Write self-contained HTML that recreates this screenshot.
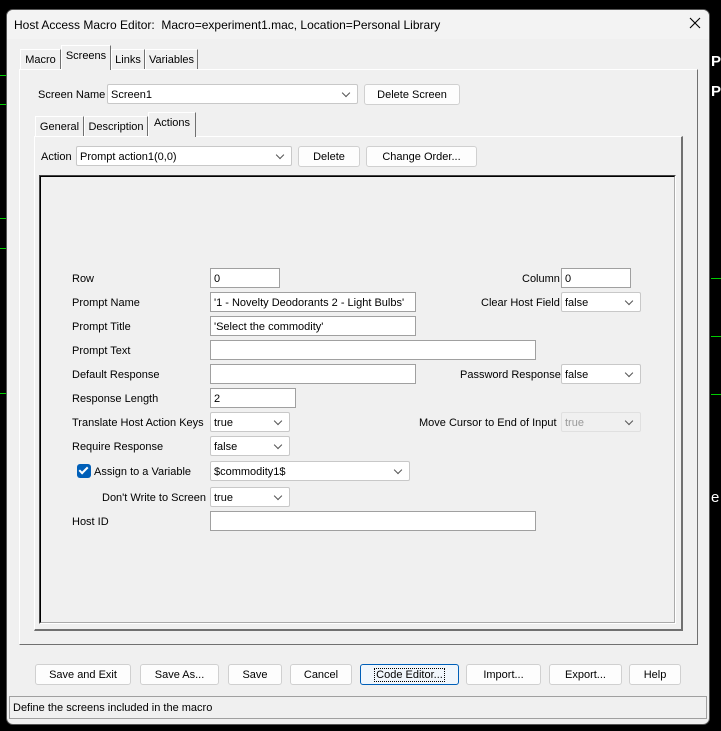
<!DOCTYPE html>
<html><head><style>
*{box-sizing:border-box;margin:0;padding:0}
body{width:721px;height:731px;background:#000;position:relative;overflow:hidden;font-family:"Liberation Sans",sans-serif;font-size:11px;color:#000}
.a{position:absolute}
.t{position:absolute;white-space:nowrap;line-height:14px;margin-top:1px}
.in{position:absolute;background:#fff;border:1px solid #a0a0a0;height:20px;padding:3px 3px 1px;line-height:14px;white-space:nowrap}
.sel{position:absolute;background:#fff;border:1px solid #c8c8c8;border-radius:2px;height:20px;padding:3px 3px 1px;line-height:14px;white-space:nowrap}
.sel:after{content:"";position:absolute;right:8px;top:5px;width:5px;height:5px;border-right:1px solid #555;border-bottom:1px solid #555;transform:rotate(45deg)}
.btn{position:absolute;background:#fdfdfd;border:1px solid #d0d0d0;border-radius:3px;height:21px;text-align:center;line-height:20px;white-space:nowrap}
.tab{position:absolute;background:#f0f0f0;border:1px solid #fff;border-right:1px solid #707070;border-bottom:none;text-align:center;line-height:20px}
.g{position:absolute;height:1px;background:#0c0}
</style></head><body>
<div class="g" style="left:0;top:75px;width:6px"></div>
<div class="g" style="left:0;top:104px;width:6px"></div>
<div class="g" style="left:0;top:218px;width:6px"></div>
<div class="g" style="left:0;top:248px;width:6px"></div>
<div class="g" style="left:0;top:393px;width:6px"></div>
<div class="g" style="left:711px;top:278px;width:10px"></div>
<div class="g" style="left:711px;top:336px;width:10px"></div>
<div class="g" style="left:711px;top:394px;width:10px"></div>
<div class="t" style="left:711px;top:54px;color:#fff;font-size:15px;font-weight:bold">P</div>
<div class="t" style="left:711px;top:84px;color:#fff;font-size:15px;font-weight:bold">P</div>
<div class="t" style="left:711px;top:490px;color:#fff;font-size:15px">e</div>
<div class="a" style="left:6px;top:9px;width:704px;height:716px;background:#f0f0f0;border-radius:7px;border:1px solid #555;overflow:hidden">
 <div class="a" style="left:0;top:0;width:704px;height:29px;background:#f3f3f3"></div>
</div>
<div class="t" style="left:14px;top:17px;font-size:12px">Host Access Macro Editor:&nbsp; Macro=experiment1.mac, Location=Personal Library</div>
<svg class="a" style="left:689px;top:17px" width="12" height="12"><path d="M1 1L11 11M11 1L1 11" stroke="#000" stroke-width="1.1"/></svg>

<div class="a" style="left:19px;top:69px;width:679px;height:576px;border:1px solid #fff;border-right:1px solid #707070;border-bottom:1px solid #707070"></div>
<div class="tab" style="left:20px;top:49px;width:41px;height:20px">Macro</div>
<div class="tab" style="left:61px;top:45px;width:50px;height:25px;z-index:2">Screens</div>
<div class="tab" style="left:111px;top:49px;width:34px;height:20px">Links</div>
<div class="tab" style="left:145px;top:49px;width:53px;height:20px">Variables</div>

<div class="t" style="left:38px;top:87px">Screen Name</div>
<div class="sel" style="left:107px;top:84px;width:251px">Screen1</div>
<div class="btn" style="left:364px;top:84px;width:96px">Delete Screen</div>

<div class="a" style="left:34px;top:136px;width:649px;height:495px;border:1px solid #fff;border-right:2px solid #707070;border-bottom:2px solid #707070"></div>
<div class="tab" style="left:35px;top:116px;width:49px;height:20px">General</div>
<div class="tab" style="left:84px;top:116px;width:64px;height:20px">Description</div>
<div class="tab" style="left:148px;top:112px;width:48px;height:25px;z-index:2">Actions</div>

<div class="t" style="left:41px;top:149px">Action</div>
<div class="sel" style="left:76px;top:146px;width:216px">Prompt action1(0,0)</div>
<div class="btn" style="left:298px;top:146px;width:62px">Delete</div>
<div class="btn" style="left:366px;top:146px;width:111px">Change Order...</div>

<div class="a" style="left:39px;top:175px;width:637px;height:449px;border:1px solid #444;border-right-color:#fff;border-bottom-color:#fff"><div class="a" style="left:0;top:0;right:0;bottom:0;border:1px solid #000;border-right-color:#aaa;border-bottom-color:#aaa"></div></div>

<div class="t" style="left:72px;top:271px">Row</div>
<div class="in" style="left:210px;top:268px;width:70px">0</div>
<div class="t" style="left:522px;top:271px">Column</div>
<div class="in" style="left:561px;top:268px;width:70px">0</div>

<div class="t" style="left:72px;top:295px">Prompt Name</div>
<div class="in" style="left:210px;top:292px;width:206px">'1 - Novelty Deodorants 2 - Light Bulbs'</div>
<div class="t" style="left:481px;top:295px">Clear Host Field</div>
<div class="sel" style="left:561px;top:292px;width:80px">false</div>

<div class="t" style="left:72px;top:319px">Prompt Title</div>
<div class="in" style="left:210px;top:316px;width:206px">'Select the commodity'</div>

<div class="t" style="left:72px;top:343px">Prompt Text</div>
<div class="in" style="left:210px;top:340px;width:326px"></div>

<div class="t" style="left:72px;top:367px">Default Response</div>
<div class="in" style="left:210px;top:364px;width:206px"></div>
<div class="t" style="left:460px;top:367px">Password Response</div>
<div class="sel" style="left:561px;top:364px;width:80px">false</div>

<div class="t" style="left:72px;top:391px">Response Length</div>
<div class="in" style="left:210px;top:388px;width:86px">2</div>

<div class="t" style="left:72px;top:415px">Translate Host Action Keys</div>
<div class="sel" style="left:210px;top:412px;width:80px">true</div>
<div class="t" style="left:419px;top:415px">Move Cursor to End of Input</div>
<div class="sel" style="left:561px;top:412px;width:80px;background:#f0f0f0;border-color:#e0e0e0;color:#999">true</div>

<div class="t" style="left:72px;top:439px">Require Response</div>
<div class="sel" style="left:210px;top:436px;width:80px">false</div>

<div class="a" style="left:77px;top:464px;width:14px;height:14px;background:#005fb8;border-radius:3px"><div class="a" style="left:4px;top:1px;width:5px;height:9px;border-right:2px solid #fff;border-bottom:2px solid #fff;transform:rotate(45deg)"></div></div>
<div class="t" style="left:94px;top:464px">Assign to a Variable</div>
<div class="sel" style="left:210px;top:461px;width:200px">$commodity1$</div>

<div class="t" style="left:102px;top:490px">Don't Write to Screen</div>
<div class="sel" style="left:210px;top:487px;width:80px">true</div>

<div class="t" style="left:72px;top:514px">Host ID</div>
<div class="in" style="left:210px;top:511px;width:326px"></div>

<div class="btn" style="left:35px;top:664px;width:96px">Save and Exit</div>
<div class="btn" style="left:140px;top:664px;width:79px">Save As...</div>
<div class="btn" style="left:228px;top:664px;width:54px">Save</div>
<div class="btn" style="left:290px;top:664px;width:62px">Cancel</div>
<div class="btn" style="left:360px;top:664px;width:99px;border-color:#005fb8;background:#f0f6fc"><span style="outline:1px dotted #000;padding:0 1px">Code Editor...</span></div>
<div class="btn" style="left:466px;top:664px;width:75px">Import...</div>
<div class="btn" style="left:549px;top:664px;width:73px">Export...</div>
<div class="btn" style="left:629px;top:664px;width:52px">Help</div>

<div class="a" style="left:9px;top:696px;width:698px;height:23px;border:1px solid #a0a0a0"></div>
<div class="t" style="left:13px;top:700px">Define the screens included in the macro</div>
</body></html>
